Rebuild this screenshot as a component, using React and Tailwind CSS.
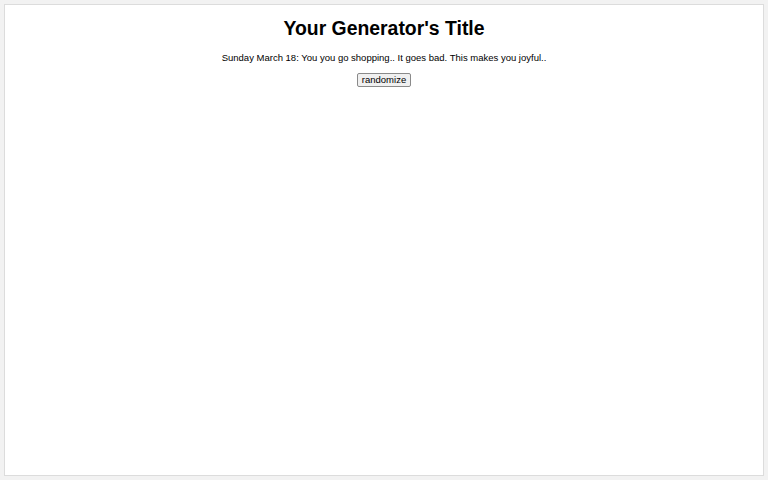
export default function App() {
  return (
    <div className="min-h-screen bg-[#f2f2f2] p-[4px] font-['Liberation_Sans',Arial,sans-serif]">
      <div className="h-[472px] bg-white border border-[#dcdcdc] flex flex-col items-center text-black">
        <h1 className="mt-[12px] text-[19.4px] font-bold leading-[23px]">Your Generator's Title</h1>
        <p className="mt-[12px] text-[9.5px] leading-[12px]">
          Sunday March 18: You you go shopping.. It goes bad. This makes you joyful..
        </p>
        <button className="mt-[9px] px-[4px] h-[14px] text-[9.5px] leading-[12px] bg-[#f0f0f0] border border-[#8a8a8a] rounded-[2px]">
          randomize
        </button>
      </div>
    </div>
  );
}
